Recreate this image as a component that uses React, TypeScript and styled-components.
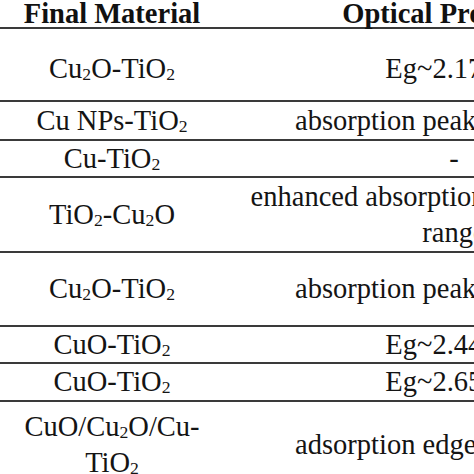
import React from "react";
import styled, { createGlobalStyle } from "styled-components";

const GlobalStyle = createGlobalStyle`
  html, body {
    margin: 0;
    padding: 0;
    background: #ffffff;
    overflow: hidden;
  }
`;

const Page = styled.div`
  width: 474px;
  height: 474px;
  overflow: hidden;
  background: #fff;
`;

const Table = styled.div`
  width: 684px;
  display: flex;
  flex-direction: column;
  font-family: "Liberation Serif", "Times New Roman", serif;
  font-size: 28.5px;
  color: #141414;
`;

const Row = styled.div<{ h?: number; top?: number }>`
  box-sizing: border-box;
  display: grid;
  grid-template-columns: 224px 460px;
  align-items: center;
  ${({ h }) => (h ? `height: ${h}px;` : "")}
  padding-top: ${({ top }) => top ?? 0}px;
  border-bottom: 2px solid #3a3a3a;
`;

const HeaderRow = styled(Row)`
  align-items: end;
  font-weight: bold;
  line-height: 28px;
  padding-bottom: 8px;
  color: #111;
`;

const Cell = styled.div`
  text-align: center;
  line-height: 36px;
  white-space: nowrap;
`;

const HeadCell = styled.div`
  text-align: center;
  white-space: nowrap;
`;

const Sub = styled.span`
  font-size: 0.62em;
  vertical-align: -0.1em;
  line-height: 0;
`;

const Cu2O = () => (
  <>
    Cu<Sub>2</Sub>O
  </>
);
const TiO2 = () => (
  <>
    TiO<Sub>2</Sub>
  </>
);

export default function App() {
  return (
    <Page>
      <GlobalStyle />
      <Table>
        <HeaderRow h={29}>
          <HeadCell>Final Material</HeadCell>
          <HeadCell>Optical Properties</HeadCell>
        </HeaderRow>
        <Row h={73} top={8}>
          <Cell>
            <Cu2O />-<TiO2 />
          </Cell>
          <Cell>Eg~2.17 eV</Cell>
        </Row>
        <Row h={39}>
          <Cell>
            Cu NPs-<TiO2 />
          </Cell>
          <Cell>absorption peak at ~580 nm</Cell>
        </Row>
        <Row h={37}>
          <Cell>
            Cu-<TiO2 />
          </Cell>
          <Cell>-</Cell>
        </Row>
        <Row h={75}>
          <Cell>
            <TiO2 />-<Cu2O />
          </Cell>
          <Cell>
            enhanced absorption in visible light
            <br />
            range
          </Cell>
        </Row>
        <Row h={74}>
          <Cell>
            <Cu2O />-<TiO2 />
          </Cell>
          <Cell>absorption peak at ~500 nm</Cell>
        </Row>
        <Row h={37}>
          <Cell>
            CuO-<TiO2 />
          </Cell>
          <Cell>Eg~2.44 eV</Cell>
        </Row>
        <Row h={38}>
          <Cell>
            CuO-<TiO2 />
          </Cell>
          <Cell>Eg~2.65 eV</Cell>
        </Row>
        <Row top={7}>
          <Cell>
            CuO/<Cu2O />/Cu-
            <br />
            <TiO2 />
          </Cell>
          <Cell>adsorption edge at ~600 nm</Cell>
        </Row>
      </Table>
    </Page>
  );
}
